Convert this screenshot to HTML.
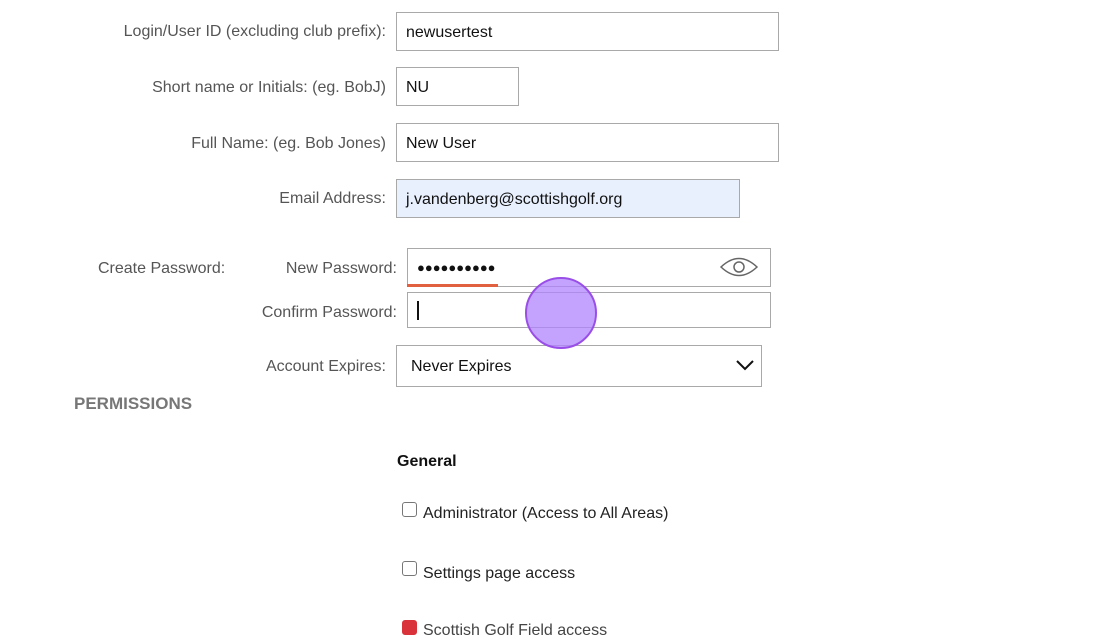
<!DOCTYPE html>
<html><head><style>
body{margin:0;width:1120px;height:626px;overflow:hidden;background:#fff;font-family:"Liberation Sans",sans-serif;position:relative}
.l{position:absolute;font-size:16px;color:#555;text-align:right;white-space:nowrap}
.b{position:absolute;border:1px solid #a9a9a9;box-sizing:border-box;background:#fff;font-size:16px;color:#111;padding-left:9px;display:flex;align-items:center}
.t{position:absolute;font-size:16px;color:#222;white-space:nowrap}
.cb{position:absolute;width:15px;height:15px;border:1px solid #777;border-radius:3px;box-sizing:border-box;background:#fff}
</style></head><body>
<div class="l" style="right:734px;top:23px">Login/User ID (excluding club prefix):</div>
<div class="b" style="left:396px;top:12px;width:383px;height:39px;padding-top:2px">newusertest</div>
<div class="l" style="right:734px;top:79px">Short name or Initials: (eg. BobJ)</div>
<div class="b" style="left:396px;top:67px;width:123px;height:39px;padding-top:2px">NU</div>
<div class="l" style="right:734px;top:135px">Full Name: (eg. Bob Jones)</div>
<div class="b" style="left:396px;top:123px;width:383px;height:39px;padding-top:2px">New User</div>
<div class="l" style="right:734px;top:190px">Email Address:</div>
<div class="b" style="left:396px;top:179px;width:344px;height:39px;background:#e8f0fe;padding-top:2px">j.vandenberg@scottishgolf.org</div>
<div class="l" style="left:98px;top:260px">Create Password:</div>
<div class="l" style="right:723px;top:260px">New Password:</div>
<div class="b" style="left:407px;top:248px;width:364px;height:39px;font-size:13px;letter-spacing:0px">●●●●●●●●●●</div>
<svg style="position:absolute;left:719px;top:256px" width="40" height="22" viewBox="0 0 40 22"><path d="M2 11 Q20 -6 38 11 Q20 28 2 11Z" fill="none" stroke="#666" stroke-width="1.5"/><circle cx="20" cy="11" r="5" fill="none" stroke="#666" stroke-width="1.5"/></svg>
<div style="position:absolute;left:407px;top:284px;width:91px;height:3px;background:#e0603f"></div>
<div class="l" style="right:723px;top:304px">Confirm Password:</div>
<div class="b" style="left:407px;top:292px;width:364px;height:36px"><span style="width:2px;height:19px;background:#111;display:block"></span></div>
<div class="l" style="right:734px;top:358px">Account Expires:</div>
<div class="b" style="left:396px;top:345px;width:366px;height:42px;padding-left:14px;padding-top:2px">Never Expires</div>
<svg style="position:absolute;left:736px;top:359px" width="18" height="12"><path d="M1 2 L9 10 L17 2" fill="none" stroke="#111" stroke-width="2"/></svg>
<div class="t" style="left:74px;top:394px;font-weight:bold;color:#777;font-size:17px">PERMISSIONS</div>
<div class="t" style="left:397px;top:453px;font-weight:bold;color:#111">General</div>
<div class="cb" style="left:402px;top:502px"></div>
<div class="t" style="left:423px;top:505px">Administrator (Access to All Areas)</div>
<div class="cb" style="left:402px;top:561px"></div>
<div class="t" style="left:423px;top:565px">Settings page access</div>
<div class="cb" style="left:402px;top:620px;background:#d9323a;border-color:#d9323a"></div>
<div class="t" style="left:423px;top:622px;color:#444">Scottish Golf Field access</div>
<div style="position:absolute;left:525px;top:277px;width:68px;height:68px;border-radius:50%;background:rgba(176,132,255,.75);border:2px solid #9a4ee8"></div>
</body></html>
